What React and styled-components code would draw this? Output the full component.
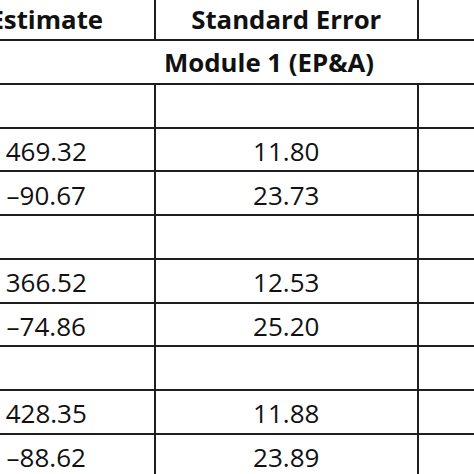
import React from "react";
import styled, { createGlobalStyle } from "styled-components";

const Global = createGlobalStyle`
  html, body { margin: 0; padding: 0; background: #fff; overflow: hidden; }
  body { width: 474px; height: 474px; }
`;

const Table = styled.div`
  margin-left: -61px;
  margin-top: -2.75px;
  width: 660px;
  font-family: "Open Sans", "Liberation Sans", sans-serif;
  color: #111;
`;

const Row = styled.div`
  display: grid;
  grid-template-columns: ${(p) => (p.$span ? "1fr" : "216.5px 263.5px 1fr")};
  height: 43.75px;
  box-sizing: border-box;
  border-bottom: 2px solid #1e1e1e;
`;

const Cell = styled.div`
  display: flex;
  align-items: center;
  justify-content: center;
  box-sizing: border-box;
  border-right: ${(p) => (p.$last ? "none" : "2px solid #1e1e1e")};
  font-size: ${(p) => (p.$bold ? "25.8px" : "26px")};
  font-weight: ${(p) => (p.$bold ? 700 : 400)};
  line-height: 1;
  padding-top: 3px;
  white-space: nowrap;
`;

const SpanCell = styled(Cell)`
  border-right: none;
  font-size: 25.8px;
`;

const rows = [
  { type: "head", cells: ["Estimate", "Standard Error", ""] },
  { type: "span", text: "Module 1 (EP&A)" },
  { cells: ["", "", ""] },
  { cells: ["469.32", "11.80", ""] },
  { cells: ["\u201390.67", "23.73", ""] },
  { cells: ["", "", ""] },
  { cells: ["366.52", "12.53", ""] },
  { cells: ["\u201374.86", "25.20", ""] },
  { cells: ["", "", ""] },
  { cells: ["428.35", "11.88", ""] },
  { cells: ["\u201388.62", "23.89", ""] },
];

export default function App() {
  return (
    <>
      <Global />
      <Table>
        {rows.map((r, i) =>
          r.type === "span" ? (
            <Row key={i} $span>
              <SpanCell $bold>{r.text}</SpanCell>
            </Row>
          ) : (
            <Row key={i}>
              {r.cells.map((c, j) => (
                <Cell key={j} $bold={r.type === "head"} $last={j === 2}>
                  {c}
                </Cell>
              ))}
            </Row>
          )
        )}
      </Table>
    </>
  );
}
